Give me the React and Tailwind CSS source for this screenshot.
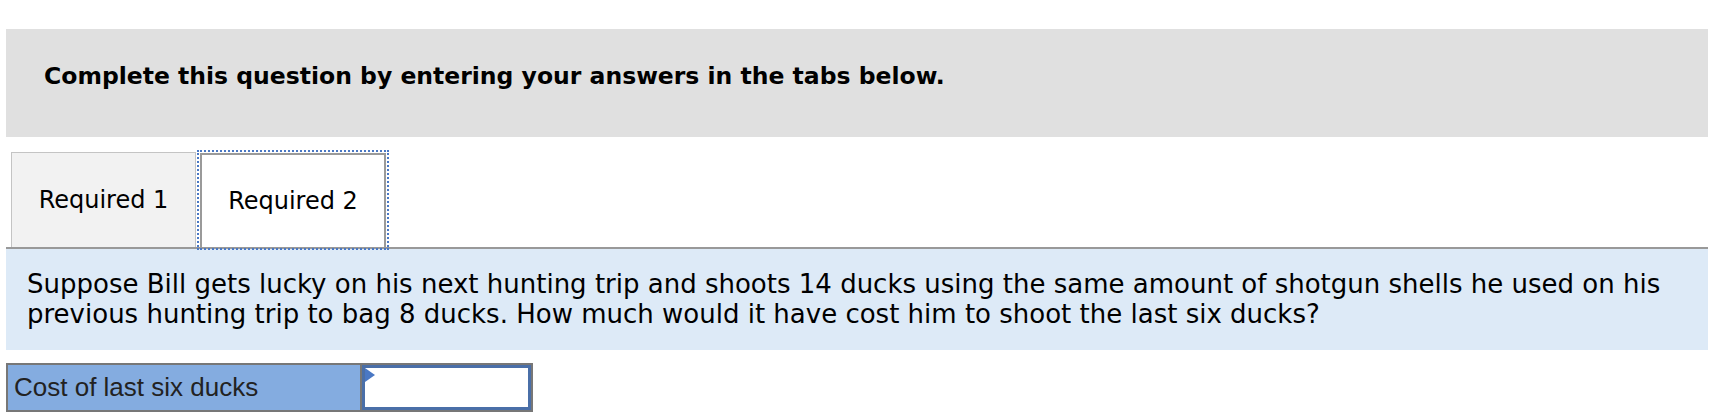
import React from "react";

const verdana = "font-['DejaVu_Sans',Verdana,sans-serif]";

export default function App() {
  return (
    <div className="w-[1718px] h-[412px] bg-white overflow-hidden">
      <div className="ml-[6px] mr-[10px] pt-[29px]">
        <div className={`h-[108px] bg-[#e0e0e0] flex items-center pl-[38px] pb-[12px] ${verdana}`}>
          <h2 className="text-[23.5px] font-bold text-black">
            Complete this question by entering your answers in the tabs below.
          </h2>
        </div>

        <div className="mt-[15px] pl-[5px] flex items-end gap-[4px]">
          <button className={`w-[185px] h-[95px] bg-[#f2f2f2] border border-b-0 border-[#c4c4c4] text-[24px] text-black ${verdana}`}>
            Required 1
          </button>
          <button className={`w-[186px] h-[94px] bg-white border-2 border-b-0 border-[#9a9a9a] text-[24px] text-black outline-2 outline-dotted outline-[#4a78c4] outline-offset-[1px] ${verdana}`}>
            Required 2
          </button>
        </div>
        <div className="h-[2px] bg-[#999999]" />

        <div className={`h-[101px] bg-[#ddeaf7] pl-[21px] pr-[20px] pt-[20px] text-[26px] leading-[30px] text-black ${verdana}`}>
          Suppose Bill gets lucky on his next hunting trip and shoots 14 ducks using the same amount of shotgun shells he used on his previous hunting trip to bag 8 ducks. How much would it have cost him to shoot the last six ducks?
        </div>

        <div className="mt-[13px] flex w-[527px] h-[49px] border-2 border-[#777777]">
          <div className="w-[354px] bg-[#84ace0] border-r-2 border-[#777777] flex items-center pl-[6px] font-['Liberation_Sans',Arial,sans-serif] text-[26px] text-[#222222]">
            Cost of last six ducks
          </div>
          <div className="relative flex-1 border-[3px] border-[#4a6fa8] bg-white">
            <svg className="absolute left-0 top-0" width="10" height="16" viewBox="0 0 10 16">
              <polygon points="0,0 10,7 0,14" fill="#4a78c4" />
            </svg>
            <input className="w-full h-full outline-none bg-transparent" />
          </div>
        </div>
      </div>
    </div>
  );
}
